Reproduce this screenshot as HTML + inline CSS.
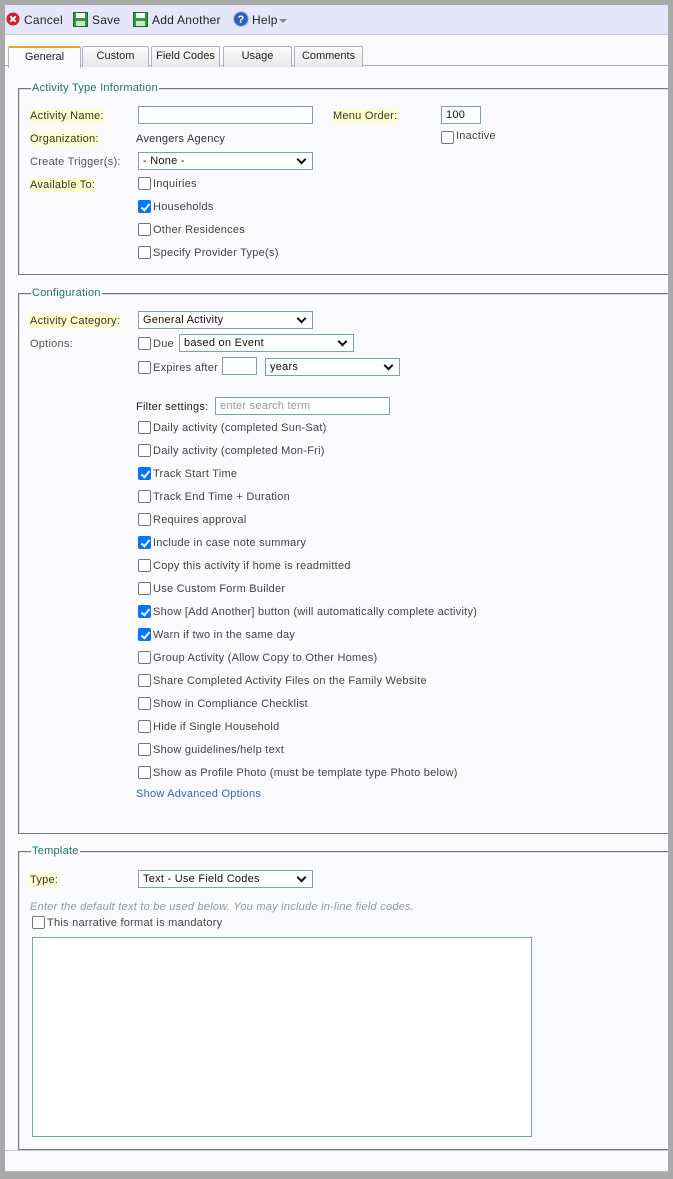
<!DOCTYPE html>
<html><head><meta charset="utf-8"><style>
*{box-sizing:border-box;margin:0;padding:0}
body{width:673px;height:1179px;background:#a9a9a9;position:relative;overflow:hidden;font-family:"Liberation Sans",Tahoma,sans-serif;font-size:11px;color:#333;letter-spacing:0.25px}
#page{position:absolute;left:5px;top:5px;width:663px;height:1167px;background:#fafaff;overflow:hidden}
.a{position:absolute;white-space:nowrap;line-height:14px}
#tb{position:absolute;left:0;top:0;width:663px;height:30px;background:#e6e6fa;border-bottom:1px solid #c4c4d4}
.tbt{position:absolute;top:8px;font-size:12px;color:#222;line-height:14px}
.tab{position:absolute;top:41px;height:21px;border:1px solid #a9b3bd;border-bottom:none;background:linear-gradient(#fafafa,#e8e8e8);text-align:center;font-size:11px;line-height:19px;color:#222;border-radius:2px 2px 0 0;letter-spacing:0}
.fs{position:absolute;left:13px;width:700px;border:1px solid #777;border-right:none;box-shadow:inset 1px 1px 0 #ddd}
.lg{position:absolute;background:#fafaff;color:#1f7a5a;font-size:11px;padding:0 1px;line-height:12px}
.hl{background:#ffffcc;color:#333}
.lbl{color:#555}
.in{position:absolute;height:18px;border:1px solid #7f9db9;background:#fff;font-size:11px;padding-left:4px;line-height:16px;color:#111}
.sel{position:absolute;height:18px;border:1px solid #7f9db9;background:#fff;font-size:11px;padding-left:4px;line-height:16px;color:#111}
.sel:after{content:"";position:absolute;right:7px;top:3px;width:5px;height:5px;border-right:2px solid #111;border-bottom:2px solid #111;transform:rotate(45deg)}
.cb{position:absolute;width:13px;height:13px;border:1px solid #767676;border-radius:2px;background:#fff}
.cb.on{background:#0075ff;border-color:#0075ff}
.cb.on:after{content:"";position:absolute;left:3.5px;top:0.5px;width:3px;height:7px;border-right:2px solid #fff;border-bottom:2px solid #fff;transform:rotate(40deg)}
.ct{position:absolute;color:#444;line-height:14px;white-space:nowrap;margin-top:2px}
</style></head><body>
<div id="page">
<div id="tb">
<svg style="position:absolute;left:1px;top:7px" width="14" height="14" viewBox="0 0 14 14"><circle cx="7" cy="7" r="6.5" fill="#d0202a"/><path d="M4.3 4.3l5.4 5.4M9.7 4.3l-5.4 5.4" stroke="#fff" stroke-width="2"/></svg>
<span class="tbt" style="left:19px">Cancel</span>
<svg style="position:absolute;left:68px;top:7px" width="15" height="15" viewBox="0 0 15 15"><rect x="0.5" y="0.5" width="14" height="14" fill="#2f9a3a" stroke="#1d6b24"/><rect x="3" y="1" width="9" height="5" fill="#fff"/><rect x="3" y="9" width="9" height="5" fill="#c9e6c9"/></svg>
<span class="tbt" style="left:87px">Save</span>
<svg style="position:absolute;left:128px;top:7px" width="15" height="15" viewBox="0 0 15 15"><rect x="0.5" y="0.5" width="14" height="14" fill="#2f9a3a" stroke="#1d6b24"/><rect x="3" y="1" width="9" height="5" fill="#fff"/><rect x="3" y="9" width="9" height="5" fill="#c9e6c9"/></svg>
<span class="tbt" style="left:147px">Add Another</span>
<svg style="position:absolute;left:228px;top:6px" width="16" height="16" viewBox="0 0 16 16"><circle cx="8" cy="8" r="7.3" fill="#2a5fc0" stroke="#9bb3e0"/><text x="8" y="12" text-anchor="middle" font-size="11" font-weight="bold" fill="#fff" font-family="Liberation Sans">?</text></svg>
<span class="tbt" style="left:247px">Help</span>
<div style="position:absolute;left:274px;top:14px;border:4px solid transparent;border-top:4px solid #888"></div>
</div>
<div style="position:absolute;left:0;top:60px;width:663px;height:1px;background:#a9b3bd"></div>
<div class="tab" style="left:3px;width:73px;height:22px;background:#fafaff;border-top:2px solid #f0a030">General</div>
<div class="tab" style="left:77px;width:67px">Custom</div>
<div class="tab" style="left:146px;width:69px">Field Codes</div>
<div class="tab" style="left:218px;width:69px">Usage</div>
<div class="tab" style="left:289px;width:69px">Comments</div>

<div class="fs" style="top:83px;height:187px"></div>
<div class="lg" style="left:26px;top:77px">Activity Type Information</div>
<span class="a hl" style="left:25px;top:104px">Activity Name:</span>
<div class="in" style="left:133px;top:101px;width:175px"></div>
<span class="a hl" style="left:328px;top:104px">Menu Order:</span>
<div class="in" style="left:436px;top:101px;width:40px">100</div>
<span class="a hl" style="left:25px;top:127px">Organization:</span>
<span class="a" style="left:131px;top:127px">Avengers Agency</span>
<div class="cb" style="left:436px;top:126px"></div><span class="ct" style="left:451px;top:122px">Inactive</span>
<span class="a lbl" style="left:25px;top:150px">Create Trigger(s):</span>
<div class="sel" style="left:133px;top:147px;width:175px">- None -</div>
<span class="a hl" style="left:25px;top:173px">Available To:</span>
<div class="cb" style="left:133px;top:172px"></div><span class="ct" style="left:148px;top:170px">Inquiries</span>
<div class="cb on" style="left:133px;top:195px"></div><span class="ct" style="left:148px;top:193px">Households</span>
<div class="cb" style="left:133px;top:218px"></div><span class="ct" style="left:148px;top:216px">Other Residences</span>
<div class="cb" style="left:133px;top:241px"></div><span class="ct" style="left:148px;top:239px">Specify Provider Type(s)</span>

<div class="fs" style="top:288px;height:541px"></div>
<div class="lg" style="left:26px;top:282px">Configuration</div>
<span class="a hl" style="left:25px;top:309px">Activity Category:</span>
<div class="sel" style="left:133px;top:306px;width:175px">General Activity</div>
<span class="a lbl" style="left:25px;top:332px">Options:</span>
<div class="cb" style="left:133px;top:332px"></div><span class="ct" style="left:148px;top:330px">Due</span>
<div class="sel" style="left:174px;top:329px;width:175px">based on Event</div>
<div class="cb" style="left:133px;top:356px"></div><span class="ct" style="left:148px;top:354px">Expires after</span>
<div class="in" style="left:217px;top:352px;width:35px"></div>
<div class="sel" style="left:260px;top:353px;width:135px">years</div>
<span class="a" style="left:131px;top:395px;color:#222">Filter settings:</span>
<div class="in" style="left:210px;top:392px;width:175px;color:#999">enter search term</div>
<div class="cb" style="left:133px;top:416px"></div><span class="ct" style="left:148px;top:414px">Daily activity (completed Sun-Sat)</span>
<div class="cb" style="left:133px;top:439px"></div><span class="ct" style="left:148px;top:437px">Daily activity (completed Mon-Fri)</span>
<div class="cb on" style="left:133px;top:462px"></div><span class="ct" style="left:148px;top:460px">Track Start Time</span>
<div class="cb" style="left:133px;top:485px"></div><span class="ct" style="left:148px;top:483px">Track End Time + Duration</span>
<div class="cb" style="left:133px;top:508px"></div><span class="ct" style="left:148px;top:506px">Requires approval</span>
<div class="cb on" style="left:133px;top:531px"></div><span class="ct" style="left:148px;top:529px">Include in case note summary</span>
<div class="cb" style="left:133px;top:554px"></div><span class="ct" style="left:148px;top:552px">Copy this activity if home is readmitted</span>
<div class="cb" style="left:133px;top:577px"></div><span class="ct" style="left:148px;top:575px">Use Custom Form Builder</span>
<div class="cb on" style="left:133px;top:600px"></div><span class="ct" style="left:148px;top:598px">Show [Add Another] button (will automatically complete activity)</span>
<div class="cb on" style="left:133px;top:623px"></div><span class="ct" style="left:148px;top:621px">Warn if two in the same day</span>
<div class="cb" style="left:133px;top:646px"></div><span class="ct" style="left:148px;top:644px">Group Activity (Allow Copy to Other Homes)</span>
<div class="cb" style="left:133px;top:669px"></div><span class="ct" style="left:148px;top:667px">Share Completed Activity Files on the Family Website</span>
<div class="cb" style="left:133px;top:692px"></div><span class="ct" style="left:148px;top:690px">Show in Compliance Checklist</span>
<div class="cb" style="left:133px;top:715px"></div><span class="ct" style="left:148px;top:713px">Hide if Single Household</span>
<div class="cb" style="left:133px;top:738px"></div><span class="ct" style="left:148px;top:736px">Show guidelines/help text</span>
<div class="cb" style="left:133px;top:761px"></div><span class="ct" style="left:148px;top:759px">Show as Profile Photo (must be template type Photo below)</span>
<span class="a" style="left:131px;top:782px;color:#3366cc">Show Advanced Options</span>

<div class="fs" style="top:846px;height:299px"></div>
<div class="lg" style="left:26px;top:840px">Template</div>
<span class="a hl" style="left:25px;top:868px">Type:</span>
<div class="sel" style="left:133px;top:865px;width:175px">Text - Use Field Codes</div>
<span class="a" style="left:25px;top:895px;font-style:italic;color:#8a9aaa">Enter the default text to be used below. You may include in-line field codes.</span>
<div class="cb" style="left:27px;top:911px"></div><span class="ct" style="left:42px;top:909px">This narrative format is mandatory</span>
<div style="position:absolute;left:27px;top:932px;width:500px;height:200px;border:1px solid #7f9db9;background:#fff"></div>
<div style="position:absolute;left:0;top:1145px;width:663px;height:1px;background:#c8c8c8"></div>
<div style="position:absolute;left:0;top:1166px;width:663px;height:1px;background:#b0b8c0"></div>
</div>
</body></html>
